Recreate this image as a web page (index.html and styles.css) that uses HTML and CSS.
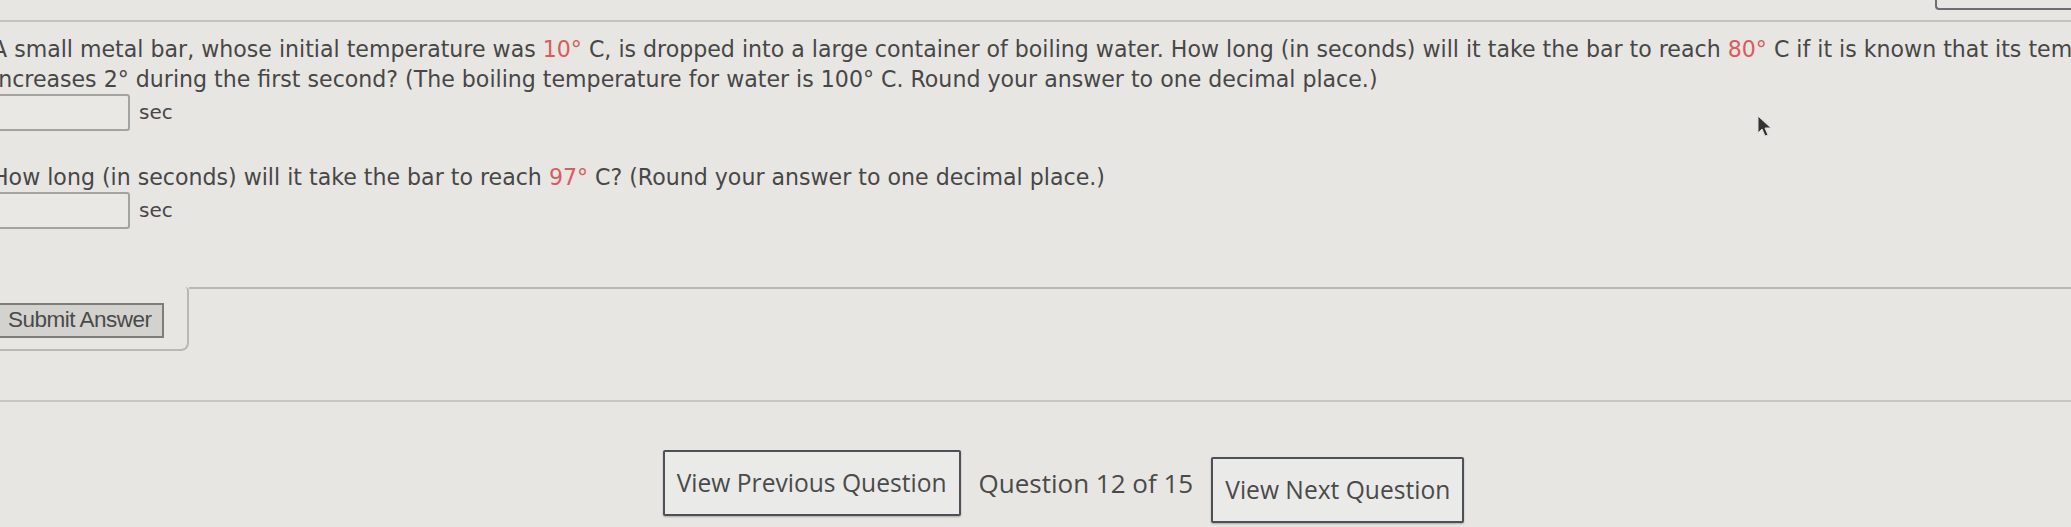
FILE: index.html
```html
<!DOCTYPE html>
<html>
<head>
<meta charset="utf-8">
<link rel="stylesheet" href="styles.css">
</head>
<body>
<div class="page">
  <div class="topbar"><div class="topbox"></div></div>
  <div class="content">
    <p class="q">A small metal bar, whose initial temperature was <span class="red">10°</span> C, is dropped into a large container of boiling water. How long (in seconds) will it take the bar to reach <span class="red">80°</span> C if it is known that its temperature<br>increases 2° during the first second? (The boiling temperature for water is 100° C. Round your answer to one decimal place.)</p>
    <div class="answer"><span class="box"></span><span class="unit">sec</span></div>
    <p class="q q2">How long (in seconds) will it take the bar to reach <span class="red">97°</span> C? (Round your answer to one decimal place.)</p>
    <div class="answer"><span class="box"></span><span class="unit">sec</span></div>
  </div>
  <div class="submit-row">
    <div class="submit-cell"><button class="submit">Submit Answer</button></div>
    <div class="submit-rest"></div>
  </div>
  <div class="sep"></div>
  <div class="nav">
    <button class="navbtn">View Previous Question</button>
    <span class="qnum">Question 12 of 15</span>
    <button class="navbtn next">View Next Question</button>
  </div>
  <svg class="cursor" width="16" height="24" viewBox="0 0 16 24"><path d="M1 1 L1 18 L5 14 L8 21 L11 20 L8 13 L14 13 Z" fill="#333" stroke="#ddd" stroke-width="1"/></svg>
</div>
</body>
</html>
```
FILE: styles.css
```css
html, body {
  margin: 0;
  padding: 0;
  background: #e7e6e3;
  overflow: hidden;
}
.page {
  position: relative;
  width: 2071px;
  height: 527px;
  overflow: hidden;
  font-family: "DejaVu Sans", Verdana, sans-serif;
  color: #474747;
}
.topbar {
  height: 20px;
  border-bottom: 2px solid #c4c3c0;
  display: flex;
  justify-content: flex-end;
  align-items: flex-start;
}
.topbox {
  width: 134px;
  height: 8px;
  border: 2px solid #6b6e75;
  border-top: none;
  border-right: none;
  border-radius: 0 0 0 4px;
}
.content {
  margin-left: -8px;
  padding-top: 12px;
}
.q {
  margin: 0;
  font-size: 22.1px;
  line-height: 30px;
  width: 2400px;
}
.red { color: #d95c5c; }
.answer {
  display: flex;
  align-items: center;
  margin-top: 0;
  height: 36px;
}
.box {
  width: 134px;
  height: 33px;
  border: 2px solid #a3a3a1;
  border-radius: 3px;
  background: #e9e8e5;
}
.unit {
  margin-left: 9px;
  font-size: 20px;
}
.q2 {
  margin-top: 32px;
}
.submit-row {
  display: flex;
  margin-top: 59px;
  height: 64px;
}
.submit-cell {
  width: 195px;
  border-right: 2px solid #b9b8b5;
  border-bottom: 2px solid #b9b8b5;
  border-radius: 0 4px 8px 0;
  display: flex;
  align-items: center;
  margin-left: -8px;
}
.submit {
  font-family: "Liberation Sans", Arial, sans-serif;
  font-size: 22.5px;
  letter-spacing: -0.5px;
  color: #4a4a4a;
  background: #d3d2cf;
  border: 2px solid #7d7d7b;
  padding: 2px 10px 3px 14px;
  margin-top: 4px;
  border-radius: 0;
}
.submit-rest {
  flex: 1;
  border-top: 2px solid #b9b8b5;
}
.sep {
  margin-top: 49px;
  border-top: 2px solid #c7c6c2;
}
.nav {
  display: flex;
  justify-content: center;
  align-items: center;
  margin-top: 41px;
  padding-left: 56px;
  gap: 18px;
}
.navbtn {
  font-family: "Open Sans", sans-serif;
  font-size: 24.6px;
  color: #4a4a4a;
  background: #eaeae8;
  border: 2px solid #4e5057;
  box-shadow: 0 1px 2px rgba(0,0,0,0.25);
  padding: 14px 12px 15px 12px;
  line-height: 33px;
  border-radius: 2px;
}
.next {
  margin-top: 14px;
}
.qnum {
  font-family: "Open Sans", sans-serif;
  font-size: 26px;
  color: #4a4a4a;
}
.cursor {
  position: absolute;
  left: 1757px;
  top: 115px;
}
```
